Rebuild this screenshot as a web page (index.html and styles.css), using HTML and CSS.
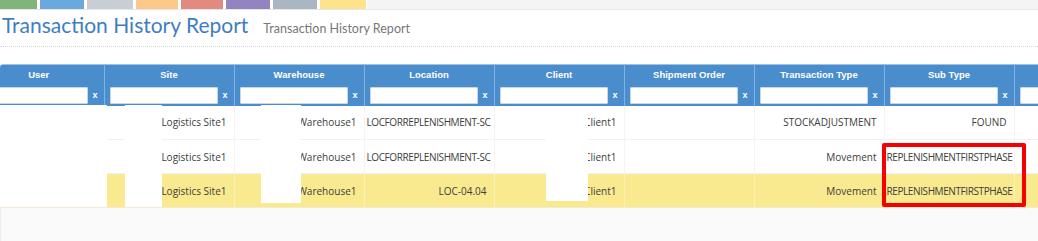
FILE: index.html
```html
<!doctype html>
<html lang="en">
<head>
    <meta charset="utf-8">
    <title>Transaction History Report</title>
    <link rel="stylesheet" href="styles.css">
</head>
<body>
    <div class="tabs">
        <span class="tab tab-green"></span>
        <span class="tab tab-blue"></span>
        <span class="tab tab-gray"></span>
        <span class="tab tab-orange"></span>
        <span class="tab tab-red"></span>
        <span class="tab tab-purple"></span>
        <span class="tab tab-slate"></span>
        <span class="tab tab-yellow"></span>
        <span class="tab-rest"></span>
    </div>

    <div class="page-head">
        <h1 class="title">Transaction History Report</h1>
        <span class="subtitle">Transaction History Report</span>
    </div>

    <div class="grid">
        <table class="grid-table">
            <colgroup>
                <col><col><col><col><col><col><col><col><col>
            </colgroup>
            <thead>
                <tr class="head">
                    <th>User</th>
                    <th>Site</th>
                    <th>Warehouse</th>
                    <th>Location</th>
                    <th>Client</th>
                    <th>Shipment Order</th>
                    <th>Transaction Type</th>
                    <th>Sub Type</th>
                    <th></th>
                </tr>
                <tr class="filters">
                    <td><div class="filter"><input type="text"><span class="clear">x</span></div></td>
                    <td><div class="filter"><input type="text"><span class="clear">x</span></div></td>
                    <td><div class="filter"><input type="text"><span class="clear">x</span></div></td>
                    <td><div class="filter"><input type="text"><span class="clear">x</span></div></td>
                    <td><div class="filter"><input type="text"><span class="clear">x</span></div></td>
                    <td><div class="filter"><input type="text"><span class="clear">x</span></div></td>
                    <td><div class="filter"><input type="text"><span class="clear">x</span></div></td>
                    <td><div class="filter"><input type="text"><span class="clear">x</span></div></td>
                    <td><div class="filter"><input type="text"></div></td>
                </tr>
            </thead>
            <tbody>
                <tr class="row">
                    <td></td>
                    <td>Logistics Site1</td>
                    <td>Warehouse1</td>
                    <td class="code">LOCFORREPLENISHMENT-SC</td>
                    <td>Client1</td>
                    <td></td>
                    <td>STOCKADJUSTMENT</td>
                    <td>FOUND</td>
                    <td></td>
                </tr>
                <tr class="row">
                    <td></td>
                    <td>Logistics Site1</td>
                    <td>Warehouse1</td>
                    <td class="code">LOCFORREPLENISHMENT-SC</td>
                    <td>Client1</td>
                    <td></td>
                    <td>Movement</td>
                    <td class="code">REPLENISHMENTFIRSTPHASE</td>
                    <td></td>
                </tr>
                <tr class="row row-selected">
                    <td></td>
                    <td>Logistics Site1</td>
                    <td>Warehouse1</td>
                    <td>LOC-04.04</td>
                    <td>Client1</td>
                    <td></td>
                    <td>Movement</td>
                    <td class="code">REPLENISHMENTFIRSTPHASE</td>
                    <td></td>
                </tr>
            </tbody>
        </table>

        <!-- redacted cells -->
        <div class="redact redact-user"></div>
        <div class="redact redact-site"></div>
        <div class="redact redact-warehouse"></div>
        <div class="redact redact-client"></div>

        <!-- highlight -->
        <div class="mark"></div>
    </div>

    <div class="grid-foot"></div>
</body>
</html>
```

FILE: styles.css
```css
body {
    margin: 0;
    font-family: "Open Sans", sans-serif;
    background: #fff;
    width: 1038px;
    overflow: hidden;
}

.tabs {
    display: flex;
    gap: 3px;
    height: 9px;
    border-bottom: 1px solid #e6e6e6;
}
.tab {
    display: block;
    height: 9px;
}
.tab-green { width: 37px; background: #80b47c; }
.tab-blue { width: 44px; background: #6ba8de; }
.tab-gray { width: 46px; background: #c9ced5; }
.tab-orange { width: 42px; background: #fcc98b; }
.tab-red { width: 42px; background: #e28a80; }
.tab-purple { width: 44px; background: #9284c0; }
.tab-slate { width: 44px; background: #aab6c1; }
.tab-yellow { width: 46px; background: #fde38c; }
.tab-rest {
    flex: 1;
    margin-left: -2px;
    background: #f4f4f4;
}

.page-head {
    display: flex;
    align-items: baseline;
    height: 33px;
    padding: 3px 0 0 2px;
    border-bottom: 1px dotted #d4d4d4;
}
.title {
    margin: 0;
    font-family: Lato, sans-serif;
    font-weight: 400;
    font-size: 21px;
    line-height: 24px;
    color: #3e7ebf;
}
.subtitle {
    margin-left: 15px;
    font-family: Lato, sans-serif;
    font-size: 12.5px;
    color: #777;
}

.grid {
    position: relative;
    margin-top: 17px;
    overflow: hidden;
    border-top-left-radius: 4px;
}
.grid-table {
    table-layout: fixed;
    border-collapse: collapse;
    width: 1170px;
    margin-left: -26px;
}
.grid-table col {
    width: 130px;
}

.head th {
    height: 20px;
    padding: 0;
    background: #4a8dcc;
    border-right: 1px solid #82b3e2;
    border-top: 1px solid #9cc3e8;
    color: #fff;
    font-family: "Liberation Sans", sans-serif;
    font-weight: bold;
    font-size: 9.5px;
    text-align: center;
    box-sizing: border-box;
}

.filters td {
    height: 21px;
    padding: 0 1px 0 5px;
    background: #4a8dcc;
    border-right: 1px solid #82b3e2;
    box-sizing: border-box;
}
.filter {
    display: flex;
    align-items: center;
}
.filter input {
    flex: 1;
    min-width: 0;
    height: 17px;
    margin: 0;
    padding: 0 3px;
    border: 1px solid #c9d6e3;
    border-radius: 1px;
    background: #fff;
    box-sizing: border-box;
}
.clear {
    width: 15px;
    text-align: center;
    color: #fff;
    font-family: "Liberation Sans", sans-serif;
    font-weight: bold;
    font-size: 9px;
}

.row td {
    height: 34px;
    padding: 0 7px 0 2px;
    border-right: 1px solid #f4f4f4;
    border-bottom: 1px solid #f1f1f1;
    font-size: 10px;
    color: #3d3d3d;
    text-align: right;
    white-space: nowrap;
    overflow: hidden;
    box-sizing: border-box;
}
.row td.code {
    letter-spacing: -0.4px;
}
.row-selected td {
    background: #f9e98f;
    border-right-color: #fbf1bd;
    border-bottom-color: #f3ead0;
}

.redact {
    position: absolute;
    background: #fff;
}
.redact-user { left: 0; top: 41px; width: 107px; height: 102px; }
.redact-site { left: 125px; top: 41px; width: 37px; height: 102px; }
.redact-warehouse { left: 261px; top: 41px; width: 40px; height: 98px; }
.redact-client { left: 546px; top: 44px; width: 42px; height: 93px; }

.mark {
    position: absolute;
    left: 882px;
    top: 79px;
    width: 144px;
    height: 64px;
    border: 4px solid #f70000;
    border-radius: 2px;
    box-sizing: border-box;
}

.grid-foot {
    height: 40px;
    background: #fafafa;
    border-left: 1px solid #ececf6;
}
```
